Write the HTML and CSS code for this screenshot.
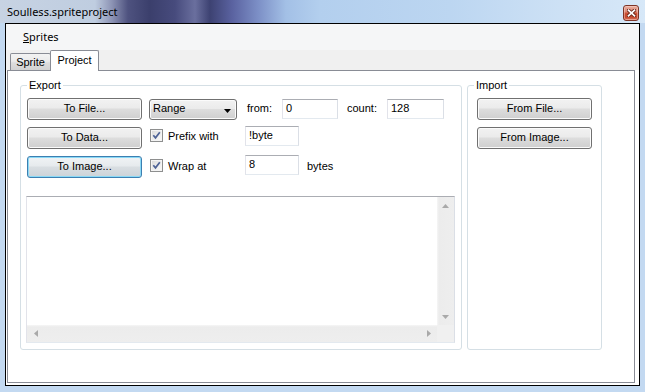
FILE: index.html
```html
<!DOCTYPE html>
<html>
<head>
<meta charset="utf-8">
<title>Soulless.spriteproject</title>
<link rel="stylesheet" href="styles.css">
</head>
<body>
<div class="window">
  <div class="titlebar">
    <span class="title">Soulless.spriteproject</span>
    <div class="close">
      <svg width="9" height="8" viewBox="0 0 9 8"><path d="M1.5 1.2 L7.5 6.8 M7.5 1.2 L1.5 6.8" stroke="#6a2315" stroke-width="3.4" stroke-linecap="square"/><path d="M1.5 1.2 L7.5 6.8 M7.5 1.2 L1.5 6.8" stroke="#ffffff" stroke-width="1.7" stroke-linecap="square"/></svg>
    </div>
  </div>
  <div class="client">
    <div class="menubar"><span class="menu-item"><u>S</u>prites</span></div>
    <div class="tabstrip">
      <div class="tab">Sprite</div>
      <div class="tab active">Project</div>
    </div>
    <div class="panel">
      <div class="groups">
        <fieldset class="group export">
          <legend>Export</legend>
          <div class="rows">
            <div class="row">
              <div class="btn">To File...</div>
              <div class="combo"><span>Range</span><svg class="combo-arrow" width="7" height="4" viewBox="0 0 7 4"><polygon points="0,0 7,0 3.5,4" fill="#000"/></svg></div>
              <span class="lbl lbl-from">from:</span>
              <div class="textbox tb-from">0</div>
              <span class="lbl lbl-count">count:</span>
              <div class="textbox tb-count">128</div>
            </div>
            <div class="row">
              <div class="btn">To Data...</div>
              <div class="checkbox"><svg width="11" height="11" viewBox="0 0 11 11"><path d="M2.3 5.2 L4.5 7.8 L8.8 2.2" fill="none" stroke="#4d6296" stroke-width="1.7"/></svg></div>
              <span class="lbl lbl-check">Prefix with</span>
              <div class="textbox tb-short">!byte</div>
            </div>
            <div class="row row-last">
              <div class="btn focus">To Image...</div>
              <div class="checkbox"><svg width="11" height="11" viewBox="0 0 11 11"><path d="M2.3 5.2 L4.5 7.8 L8.8 2.2" fill="none" stroke="#4d6296" stroke-width="1.7"/></svg></div>
              <span class="lbl lbl-check">Wrap at</span>
              <div class="textbox tb-short">8</div>
              <span class="lbl lbl-bytes">bytes</span>
            </div>
          </div>
          <div class="textarea">
            <div class="ta-body"></div>
            <div class="vscroll">
              <div class="sb-btn"><svg width="7" height="4" viewBox="0 0 7 4"><polygon points="0,4 7,4 3.5,0" fill="#a9a9a9"/></svg></div>
              <div class="sb-btn"><svg width="7" height="4" viewBox="0 0 7 4"><polygon points="0,0 7,0 3.5,4" fill="#a9a9a9"/></svg></div>
            </div>
            <div class="hscroll">
              <div class="sb-btn"><svg width="4" height="7" viewBox="0 0 4 7"><polygon points="4,0 4,7 0,3.5" fill="#a9a9a9"/></svg></div>
              <div class="sb-btn"><svg width="4" height="7" viewBox="0 0 4 7"><polygon points="0,0 0,7 4,3.5" fill="#a9a9a9"/></svg></div>
            </div>
            <div class="corner"></div>
          </div>
        </fieldset>
        <fieldset class="group import">
          <legend>Import</legend>
          <div class="rows">
            <div class="row"><div class="btn">From File...</div></div>
            <div class="row"><div class="btn">From Image...</div></div>
          </div>
        </fieldset>
      </div>
    </div>
  </div>
</div>
</body>
</html>
```
FILE: styles.css
```css
html, body {
  margin: 0;
  padding: 0;
}

body {
  width: 645px;
  height: 392px;
  overflow: hidden;
  background: #c3d9f1;
  font-family: "Liberation Sans", Arial, sans-serif;
  font-size: 11px;
  color: #000;
}

.window {
  width: 645px;
  height: 392px;
  display: flex;
  flex-direction: column;
}

.titlebar {
  flex: none;
  height: 23px;
  display: flex;
  align-items: center;
  justify-content: space-between;
  padding: 0 6px 0 7px;
  background: linear-gradient(90deg, #c7d3e3 0px, #bfcde0 95px, #8c93b4 112px, #4e527f 128px, #3b3f6c 150px, #474b7d 175px, #6a6f9e 195px, #3d4272 210px, #5a62a0 232px, #7c8fc6 258px, #a3c0e6 286px, #b3cfee 320px, #bcd6f1 450px, #cde1f5 560px, #d7e8f8 645px);
}

.title {
  font-family: "Noto Sans", "Liberation Sans", sans-serif;
  font-size: 11px;
  line-height: 14px;
  color: #000;
}

.close {
  align-self: flex-start;
  margin-top: 5px;
  width: 16px;
  height: 16px;
  box-sizing: border-box;
  border: 1px solid #7d3426;
  border-radius: 3px;
  background: linear-gradient(#eab0a2 0%, #dc8673 40%, #c84a2f 55%, #c4482e 80%, #d8775f 100%);
  box-shadow: inset 0 0 0 1px rgba(255, 220, 210, 0.45);
  display: flex;
  align-items: center;
  justify-content: center;
}

.client {
  flex: 1;
  margin: 0 5px 6px;
  border: 1px solid #000;
  background: #fff;
  display: flex;
  flex-direction: column;
  min-height: 0;
}

.menubar {
  flex: none;
  height: 26px;
  background: #f5f6f7;
  display: flex;
  align-items: center;
  padding-left: 17px;
  font-family: "Noto Sans", "Liberation Sans", sans-serif;
  font-size: 11px;
  line-height: 14px;
}

.tabstrip {
  flex: none;
  height: 20px;
  background: #f0f0f0;
  display: flex;
  align-items: flex-end;
  padding-left: 4px;
}

.tab {
  width: 41px;
  height: 17px;
  box-sizing: border-box;
  border: 1px solid #898c95;
  border-bottom: none;
  border-radius: 2px 2px 0 0;
  background: linear-gradient(#f3f3f3, #ebebeb 45%, #dddddd 55%, #d2d2d2);
  text-align: center;
  line-height: 13px;
  padding-top: 2px;
}

.tab.active {
  position: relative;
  z-index: 1;
  width: 49px;
  height: 21px;
  margin-left: -1px;
  margin-bottom: -1px;
  padding-top: 3px;
  background: #fff;
}

.panel {
  flex: none;
  margin-left: 1px;
  width: 628px;
  height: 313px;
  box-sizing: border-box;
  border: 1px solid #898c95;
  background: #fff;
  padding: 9px 0 0 12px;
}

.groups {
  display: flex;
  gap: 5px;
}

.group {
  margin: 0;
  min-width: 0;
  box-sizing: border-box;
  border: 1px solid #d5dfe5;
  border-radius: 3px;
  padding: 7px 6px 6px 6px;
}

.group legend {
  padding: 0 2px;
  font-size: 11px;
  line-height: 11px;
}

.export {
  width: 442px;
}

.import {
  width: 135px;
  padding-left: 9px;
}

.import legend {
  margin-left: -3px;
}

.rows {
  display: flex;
  flex-direction: column;
  gap: 7px;
}

.row {
  display: flex;
  align-items: flex-start;
  height: 22px;
}

.btn {
  flex: none;
  width: 115px;
  height: 22px;
  box-sizing: border-box;
  border: 1px solid #707070;
  border-radius: 3px;
  background: linear-gradient(#f2f2f2 0%, #ebebeb 45%, #dddddd 50%, #cfcfcf 100%);
  box-shadow: inset 0 0 0 1px #fbfbfb;
  text-align: center;
  line-height: 13px;
  padding-top: 3px;
}

.btn.focus {
  border-color: #3c7fb1;
  background: linear-gradient(#f0f3f5 0%, #e6eaed 45%, #d9dee2 50%, #ccd3d8 100%);
  box-shadow: inset 0 0 0 1px #8ad9f6;
}

.combo {
  flex: none;
  width: 88px;
  height: 21px;
  margin: 1px 0 0 7px;
  box-sizing: border-box;
  border: 1px solid #707070;
  border-radius: 3px;
  background: linear-gradient(#f2f2f2 0%, #ebebeb 45%, #dddddd 50%, #cfcfcf 100%);
  box-shadow: inset 0 0 0 1px #fbfbfb;
  display: flex;
  justify-content: space-between;
  align-items: flex-start;
  padding: 2px 5px 0 3px;
  line-height: 13px;
}

.combo-arrow {
  margin-top: 7px;
}

.lbl {
  flex: none;
  line-height: 13px;
  white-space: nowrap;
}

.lbl-from {
  width: 35px;
  margin: 4px 0 0 10px;
}

.lbl-count {
  width: 40px;
  margin: 4px 0 0 9px;
}

.lbl-check {
  width: 77px;
  margin: 3px 0 0 5px;
}

.lbl-bytes {
  margin: 4px 0 0 8px;
}

.textbox {
  flex: none;
  height: 20px;
  box-sizing: border-box;
  border: 1px solid;
  border-color: #abadb3 #dbdfe6 #e3e9ef #e2e3ea;
  background: #fff;
  padding: 2px 3px 0;
  line-height: 13px;
}

.tb-from {
  width: 56px;
  margin-top: 1px;
}

.tb-count {
  width: 57px;
  margin-top: 1px;
}

.tb-short {
  width: 54px;
  margin-top: -1px;
}

.checkbox {
  flex: none;
  width: 13px;
  height: 13px;
  box-sizing: border-box;
  margin: 2px 0 0 8px;
  border: 1px solid #8e8f8f;
  background: linear-gradient(135deg, #d9d9d9 0%, #ededed 55%, #fbfbfb 100%);
  box-shadow: inset 0 0 0 1px #f4f4f4;
  display: flex;
}

.row-last .checkbox {
  margin-top: 3px;
}

.row-last .lbl-check {
  margin-top: 4px;
}

.textarea {
  margin: 18px 0 0 -1px;
  width: 429px;
  height: 147px;
  box-sizing: border-box;
  border: 1px solid;
  border-color: #abadb3 #dbdfe6 #e3e9ef #e2e3ea;
  display: grid;
  grid-template-columns: 1fr 17px;
  grid-template-rows: 1fr 17px;
  background: #fff;
}

.ta-body {
  grid-column: 1;
  grid-row: 1;
}

.vscroll {
  grid-column: 2;
  grid-row: 1;
  background: linear-gradient(90deg, #f6f6f6 0, #ececec 2px, #eeeeee 100%);
  display: flex;
  flex-direction: column;
  justify-content: space-between;
}

.hscroll {
  grid-column: 1;
  grid-row: 2;
  background: linear-gradient(#f6f6f6 0, #ececec 2px, #eeeeee 100%);
  display: flex;
  justify-content: space-between;
}

.sb-btn {
  width: 17px;
  height: 17px;
  display: flex;
  align-items: center;
  justify-content: center;
}

.corner {
  grid-column: 2;
  grid-row: 2;
  background: #f0f0f0;
}
```
